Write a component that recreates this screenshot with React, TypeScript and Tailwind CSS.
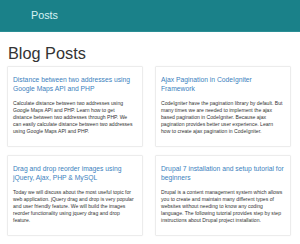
import React from "react";

const posts = [
  {
    title: ["Distance between two addresses using", "Google Maps API and PHP"],
    body: [
      "Calculate distance between two addresses using",
      "Google Maps API and PHP. Learn how to get",
      "distance between two addresses through PHP. We",
      "can easily calculate distance between two addresses",
      "using Google Maps API and PHP.",
    ],
  },
  {
    title: ["Ajax Pagination in CodeIgniter", "Framework"],
    body: [
      "CodeIgniter have the pagination library by default. But",
      "many times we are needed to implement the ajax",
      "based pagination in CodeIgniter. Because ajax",
      "pagination provides better user experience. Learn",
      "how to create ajax pagination in CodeIgniter.",
    ],
  },
  {
    title: ["Drag and drop reorder images using", "jQuery, Ajax, PHP & MySQL"],
    body: [
      "Today we will discuss about the most useful topic for",
      "web application. jQuery drag and drop is very popular",
      "and user friendly feature. We will build the images",
      "reorder functionality using jquery drag and drop",
      "feature.",
    ],
  },
  {
    title: ["Drupal 7 installation and setup tutorial for", "beginners"],
    body: [
      "Drupal is a content management system which allows",
      "you to create and maintain many different types of",
      "websites without needing to know any coding",
      "language. The following tutorial provides step by step",
      "instructions about Drupal project installation.",
    ],
  },
];

export default function App() {
  return (
    <div className="w-[300px] h-[244px] overflow-hidden bg-white font-['Liberation_Sans',Arial,sans-serif]">
      <div className="h-[32px] bg-[#1a8189] border-b border-[#2a8e95] flex items-center">
        <span className="ml-[31px] text-[10.8px] leading-none text-[#d6f2f4]">Posts</span>
      </div>
      <h1 className="ml-[8px] mt-[12px] text-[16.3px] leading-[18px] text-[#333]">Blog Posts</h1>
      <div className="mt-[4px] pl-[7px] pr-[9px] grid grid-cols-2 gap-x-[12px] gap-y-[8px]">
        {posts.map((p) => (
          <div
            key={p.title[0]}
            className="h-[81px] border border-[#ececec] rounded-[1px] shadow-[0_0_2px_rgba(0,0,0,0.04)] pt-[8px] pl-[5px] pr-[5px] whitespace-nowrap"
          >
            <h3 className="text-[6.75px] leading-[9.3px] text-[#3c7fbe]">
              {p.title.map((l) => (
                <span key={l} className="block">{l}</span>
              ))}
            </h3>
            <p className="mt-[6px] text-[5.1px] leading-[7.2px] text-[#333]">
              {p.body.map((l) => (
                <span key={l} className="block">{l}</span>
              ))}
            </p>
          </div>
        ))}
      </div>
    </div>
  );
}
